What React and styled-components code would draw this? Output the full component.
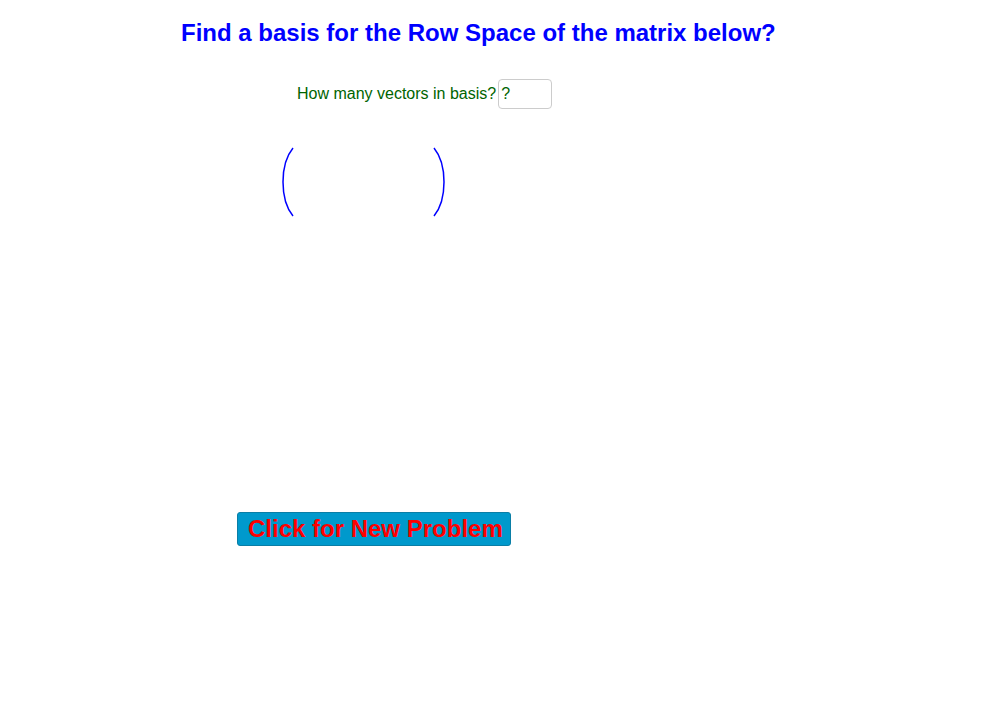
import React from "react";
import styled, { createGlobalStyle } from "styled-components";

const GlobalStyle = createGlobalStyle`
  html, body {
    margin: 0;
    padding: 0;
    background: #ffffff;
    font-family: "Liberation Sans", Arial, sans-serif;
  }
`;

// 整個畫布
const Canvas = styled.div`
  width: 987px;
  height: 702px;
  display: flex;
  flex-direction: column;
  align-items: flex-start;
  box-sizing: border-box;
  padding-top: 19px;
  overflow: hidden;
`;

const Title = styled.h1`
  margin: 0 0 0 181px;
  font-size: 24px;
  line-height: 28px;
  font-weight: bold;
  color: #0000ff;
  white-space: nowrap;
`;

const QuestionRow = styled.div`
  display: flex;
  align-items: center;
  margin: 32px 0 0 297px;
  gap: 2px;
`;

const Label = styled.span`
  font-size: 16px;
  color: #006400;
  white-space: nowrap;
`;

const AnswerInput = styled.input`
  width: 54px;
  height: 30px;
  box-sizing: border-box;
  border: 1px solid #cccccc;
  border-radius: 4px;
  padding: 0 2px;
  font-family: "Liberation Sans", Arial, sans-serif;
  font-size: 16px;
  color: #006400;
  outline: none;
`;

const Matrix = styled.div`
  display: flex;
  gap: 139px;
  margin: 38px 0 0 282px;
`;

const Paren = styled.svg`
  width: 12px;
  height: 70px;
  display: block;
`;

const NewButton = styled.button`
  margin: 295px 0 0 237px;
  width: 274px;
  height: 34px;
  box-sizing: border-box;
  padding: 0 10px;
  background: #0099cc;
  border: 1px solid #0a7ea6;
  border-radius: 3px;
  color: #ff0000;
  font-family: "Liberation Sans", Arial, sans-serif;
  font-size: 24px;
  font-weight: bold;
  text-align: left;
  cursor: pointer;
  white-space: nowrap;
`;

const LeftParen = () => (
  <Paren viewBox="0 0 12 70">
    <path d="M11 1 C2 12 1 25 1 35 C1 45 2 58 11 69" fill="none" stroke="#0000ff" strokeWidth="1.5" />
  </Paren>
);

const RightParen = () => (
  <Paren viewBox="0 0 12 70">
    <path d="M1 1 C10 12 11 25 11 35 C11 45 10 58 1 69" fill="none" stroke="#0000ff" strokeWidth="1.5" />
  </Paren>
);

const App = () => {
  return (
    <>
      <GlobalStyle />
      <Canvas>
        <Title>Find a basis for the Row Space of the matrix below?</Title>
        <QuestionRow>
          <Label>How many vectors in basis?</Label>
          <AnswerInput type="text" defaultValue="?" />
        </QuestionRow>
        <Matrix>
          <LeftParen />
          <RightParen />
        </Matrix>
        <NewButton>Click for New Problem</NewButton>
      </Canvas>
    </>
  );
};

export default App;
